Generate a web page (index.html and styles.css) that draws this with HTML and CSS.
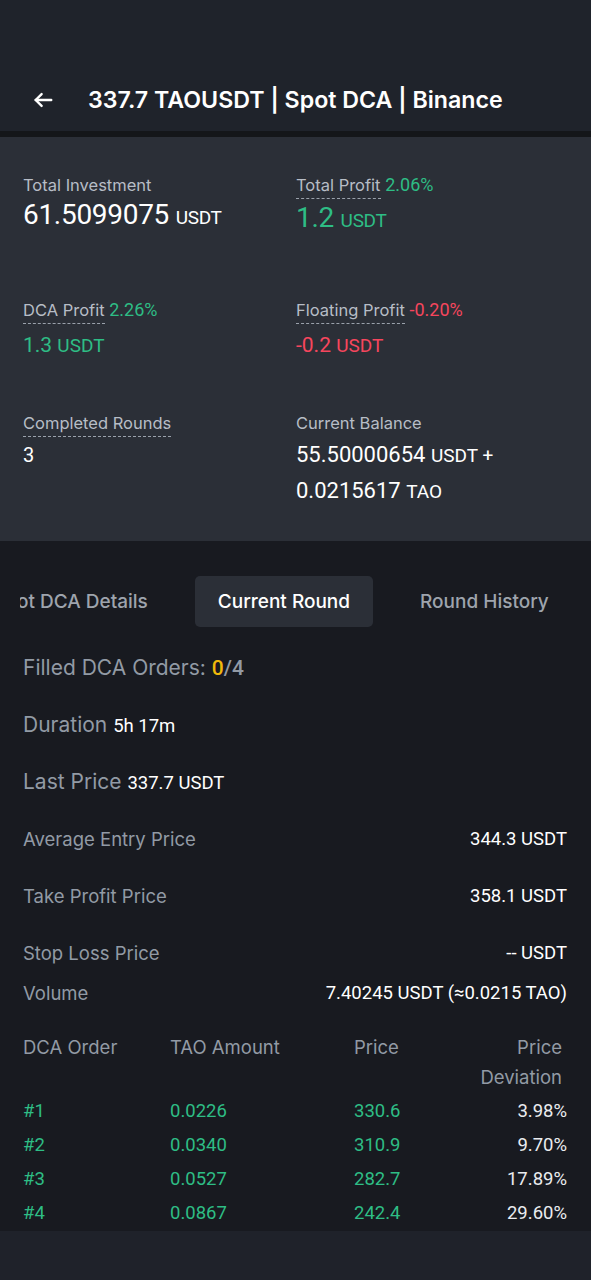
FILE: index.html
```html
<!DOCTYPE html>
<html lang="en">
<head>
    <meta charset="UTF-8">
    <title>337.7 TAOUSDT | Spot DCA | Binance</title>
    <link rel="stylesheet" href="styles.css">
</head>
<body>
    <header class="topbar">
        <svg class="back" width="22" height="22" viewBox="0 0 24 24" fill="none" stroke="#fff" stroke-width="2.6" stroke-linecap="round" stroke-linejoin="round">
            <path d="M21 12H4"/>
            <path d="M10.5 5.5L4 12l6.5 6.5"/>
        </svg>
        <h1>337.7 TAOUSDT | Spot DCA | Binance</h1>
    </header>

    <!-- summary -->
    <section class="summary">
        <div class="stat">
            <div class="stat-label">Total Investment</div>
            <div class="stat-value big">61.5099075 <span class="unit">USDT</span></div>
        </div>
        <div class="stat">
            <div class="stat-label"><span class="dashed">Total Profit</span> <span class="pct green">2.06%</span></div>
            <div class="stat-value big green">1.2 <span class="unit">USDT</span></div>
        </div>
        <div class="stat">
            <div class="stat-label"><span class="dashed">DCA Profit</span> <span class="pct green">2.26%</span></div>
            <div class="stat-value mid green">1.3 <span class="unit">USDT</span></div>
        </div>
        <div class="stat">
            <div class="stat-label"><span class="dashed">Floating Profit</span> <span class="pct red">-0.20%</span></div>
            <div class="stat-value mid red">-0.2 <span class="unit">USDT</span></div>
        </div>
        <div class="stat">
            <div class="stat-label"><span class="dashed">Completed Rounds</span></div>
            <div class="stat-value small">3</div>
        </div>
        <div class="stat">
            <div class="stat-label">Current Balance</div>
            <div class="stat-value balance">55.50000654 <span class="unit">USDT +</span><br>0.0215617 <span class="unit">TAO</span></div>
        </div>
    </section>

    <main class="content">
        <div class="tabs-viewport">
            <div class="tabs">
                <div class="tab">Spot DCA Details</div>
                <div class="tab active">Current Round</div>
                <div class="tab">Round History</div>
            </div>
        </div>

        <div class="info">
            <div class="info-row lead">Filled DCA Orders: <span class="count"><span class="yellow">0</span>/4</span></div>
            <div class="info-row lead">Duration <span class="num">5h 17m</span></div>
            <div class="info-row lead">Last Price <span class="num">337.7 USDT</span></div>
            <div class="info-row split"><span>Average Entry Price</span><span class="num">344.3 USDT</span></div>
            <div class="info-row split"><span>Take Profit Price</span><span class="num">358.1 USDT</span></div>
            <div class="info-row split pull-down"><span>Stop Loss Price</span><span class="num">-- USDT</span></div>
            <div class="info-row split pull-up"><span>Volume</span><span class="num">7.40245 USDT (≈0.0215 TAO)</span></div>
        </div>

        <div class="orders">
            <div class="th">DCA Order</div>
            <div class="th">TAO Amount</div>
            <div class="th">Price</div>
            <div class="th right pad">Price<br>Deviation</div>

            <div class="td green">#1</div>
            <div class="td green">0.0226</div>
            <div class="td green">330.6</div>
            <div class="td right">3.98%</div>

            <div class="td green">#2</div>
            <div class="td green">0.0340</div>
            <div class="td green">310.9</div>
            <div class="td right">9.70%</div>

            <div class="td green">#3</div>
            <div class="td green">0.0527</div>
            <div class="td green">282.7</div>
            <div class="td right">17.89%</div>

            <div class="td green">#4</div>
            <div class="td green">0.0867</div>
            <div class="td green">242.4</div>
            <div class="td right">29.60%</div>
        </div>
    </main>

    <footer class="bottombar"></footer>
</body>
</html>
```

FILE: styles.css
```css
body {
    margin: 0;
    background-color: #181a20;
    color: #eaecef;
    font-family: 'Inter', 'Noto Sans', sans-serif;
    width: 591px;
}
.topbar {
    height: 137px;
    background-color: #1f232b;
    display: flex;
    align-items: flex-end;
    padding: 0 0 11px 32px;
    box-sizing: border-box;
    border-bottom: 6px solid #141619;
}
.back {
    margin-bottom: 9px;
}
.topbar h1 {
    margin: 0 0 0 34px;
    font-size: 23.2px;
    font-weight: 600;
    line-height: 40px;
    color: #fff;
}
/* summary panel */
.summary {
    background-color: #2b2f37;
    display: grid;
    grid-template-columns: 273px 1fr;
    grid-template-rows: 125px 113px auto;
    padding: 37px 23px 32px;
}
.stat-label {
    font-size: 16.5px;
    line-height: 22px;
    color: #b7bdc6;
}
.dashed {
    display: inline-block;
    border-bottom: 1px dashed #9aa1ab;
    padding-bottom: 2px;
}
.pct {
    font-family: 'Roboto', sans-serif;
    font-size: 18px;
}
.green { color: #2ebd85; }
.red { color: #f6465d; }
.yellow { color: #f0b90b; }
.stat-value {
    font-family: 'Roboto', sans-serif;
    color: #fff;
}
.stat-value.green { color: #2ebd85; }
.stat-value.red { color: #f6465d; }
.stat-value .unit {
    font-size: 19px;
}
.stat-value.big {
    font-size: 28px;
    letter-spacing: -0.3px;
    line-height: 38px;
}
.stat-value.mid {
    font-size: 21px;
    line-height: 40px;
    margin-top: 1px;
}
.stat-value.mid .unit {
    font-size: 19px;
}
.stat-value.small {
    font-size: 20px;
    line-height: 36px;
}
.stat-value.balance {
    font-size: 22px;
    line-height: 35px;
    margin-top: 3px;
}
.stat-value.balance .unit {
    font-size: 19px;
}
/* tabs */
.tabs-viewport {
    margin: 35px 20px 0;
    overflow: hidden;
}
.tabs {
    display: flex;
    gap: 24px;
    margin-left: -50px;
}
.tab {
    flex: none;
    padding: 0 23px;
    height: 51px;
    line-height: 51px;
    font-size: 19px;
    font-weight: 500;
    color: #9ea4ad;
    border-radius: 5px;
}
.tab.active {
    background-color: #2b2f37;
    color: #fff;
}
/* info rows */
.info {
    padding: 12px 24px 0 23px;
}
.info-row {
    height: 24px;
    padding: 16.5px 0;
    line-height: 24px;
    font-size: 18.5px;
    color: #929aa5;
}
.info-row.lead {
    font-size: 21px;
}
.info-row .num {
    font-family: 'Roboto', sans-serif;
    font-size: 18.5px;
    color: #fff;
}
.count {
    font-family: 'Roboto', sans-serif;
    font-weight: 500;
}
.info-row.split {
    display: flex;
    justify-content: space-between;
}
.info-row.pull-down {
    padding-bottom: 8px;
}
.info-row.pull-up {
    padding-top: 8px;
}
/* orders table */
.orders {
    display: grid;
    grid-template-columns: 147px 184px 1fr 1fr;
    padding: 11px 24px 1px 23px;
}
.th {
    font-size: 18.5px;
    line-height: 30px;
    color: #929aa5;
    margin-bottom: 2px;
}
.td {
    font-family: 'Roboto', sans-serif;
    font-size: 18.5px;
    line-height: 34px;
    color: #eaecef;
}
.td.green { color: #2ebd85; }
.right {
    text-align: right;
}
.pad {
    padding-right: 5px;
}
.bottombar {
    height: 60px;
    background-color: #1f222a;
}
```
